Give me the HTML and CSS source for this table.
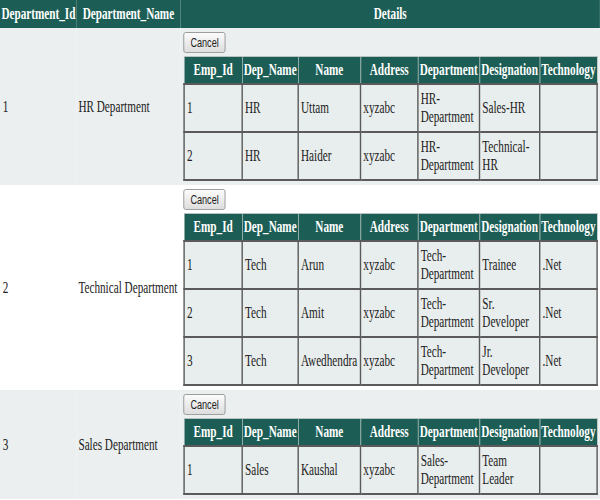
FILE: index.html
```html
<!DOCTYPE html>
<html>
<head>
<meta charset="utf-8">
<link rel="stylesheet" href="styles.css">
</head>
<body>
<div class="frame">
<div class="page">
<table class="grid">
  <colgroup><col class="c-id"><col class="c-name"><col></colgroup>
  <tr class="head">
    <th>Department_Id</th><th>Department_Name</th><th>Details</th>
  </tr>
  <tr class="row">
    <td>1</td><td>HR Department</td>
    <td class="details">
      <button class="btn">Cancel</button>
      <table class="sub">
        <colgroup><col class="s1"><col class="s2"><col class="s3"><col class="s4"><col class="s5"><col class="s6"><col></colgroup>
        <tr><th>Emp_Id</th><th>Dep_Name</th><th>Name</th><th>Address</th><th>Department</th><th>Designation</th><th>Technology</th></tr>
        <tr><td>1</td><td>HR</td><td>Uttam</td><td>xyzabc</td><td>HR-Department</td><td>Sales-HR</td><td></td></tr>
        <tr><td>2</td><td>HR</td><td>Haider</td><td>xyzabc</td><td>HR-Department</td><td>Technical-HR</td><td></td></tr>
      </table>
    </td>
  </tr>
  <tr class="row alt">
    <td>2</td><td>Technical Department</td>
    <td class="details">
      <button class="btn">Cancel</button>
      <table class="sub">
        <colgroup><col class="s1"><col class="s2"><col class="s3"><col class="s4"><col class="s5"><col class="s6"><col></colgroup>
        <tr><th>Emp_Id</th><th>Dep_Name</th><th>Name</th><th>Address</th><th>Department</th><th>Designation</th><th>Technology</th></tr>
        <tr><td>1</td><td>Tech</td><td>Arun</td><td>xyzabc</td><td>Tech-Department</td><td>Trainee</td><td>.Net</td></tr>
        <tr><td>2</td><td>Tech</td><td>Amit</td><td>xyzabc</td><td>Tech-Department</td><td>Sr. Developer</td><td>.Net</td></tr>
        <tr><td>3</td><td>Tech</td><td>Awedhendra</td><td>xyzabc</td><td>Tech-Department</td><td>Jr. Developer</td><td>.Net</td></tr>
      </table>
    </td>
  </tr>
  <tr class="row">
    <td>3</td><td>Sales Department</td>
    <td class="details">
      <button class="btn">Cancel</button>
      <table class="sub">
        <colgroup><col class="s1"><col class="s2"><col class="s3"><col class="s4"><col class="s5"><col class="s6"><col></colgroup>
        <tr><th>Emp_Id</th><th>Dep_Name</th><th>Name</th><th>Address</th><th>Department</th><th>Designation</th><th>Technology</th></tr>
        <tr><td>1</td><td>Sales</td><td>Kaushal</td><td>xyzabc</td><td>Sales-Department</td><td>Team Leader</td><td></td></tr>
      </table>
    </td>
  </tr>
</table>
</div>
</div>
</body>
</html>
```

FILE: styles.css
```css
html, body {
  margin: 0;
  padding: 0;
  overflow: hidden;
  background: #ffffff;
}

.frame {
  width: 600px;
  height: 500px;
  overflow: hidden;
}

.page {
  width: 857px;
  transform: scaleX(0.7);
  transform-origin: 0 0;
  font-family: "Liberation Serif", "Times New Roman", serif;
  font-size: 16px;
  color: #222222;
}

.grid {
  width: 857px;
  border-collapse: collapse;
  table-layout: fixed;
}

.c-id { width: 109px; }
.c-name { width: 149px; }

.head > th {
  background: #1c5e55;
  color: #ffffff;
  font-weight: bold;
  padding: 5px 2px;
  text-align: center;
  white-space: nowrap;
}

.row > td {
  padding: 4px;
  vertical-align: middle;
  white-space: nowrap;
  text-align: left;
}

.row > td:nth-child(2) {
  padding-left: 3px;
  padding-right: 1px;
}

.row { background: #ebefef; }
.row.alt { background: #ffffff; }

.row > td.details {
  white-space: normal;
  padding: 4px 3px 4px 4px;
}

.btn {
  display: block;
  height: 21px;
  margin: 0 0 3px 0;
  padding: 1px 9px;
  font-family: "Liberation Sans", Arial, sans-serif;
  font-size: 13px;
  color: #222222;
  background: linear-gradient(#fbfbfb, #dedede);
  border: 1px solid #8f8f8f;
  border-radius: 3px;
}

.sub {
  width: 100%;
  border-collapse: collapse;
  table-layout: fixed;
}

.s1 { width: 83px; }
.s2 { width: 80px; }
.s3 { width: 89px; }
.s4 { width: 82px; }
.s5 { width: 88px; }
.s6 { width: 86px; }

.sub th {
  background: #1c5e55;
  color: #ffffff;
  font-weight: bold;
  padding: 4px 1px;
  text-align: center;
  white-space: nowrap;
  border: 1px solid #b7c3c1;
}

.sub td {
  background: #e8eded;
  padding: 5px 3px;
  text-align: left;
  vertical-align: middle;
  border: 2px solid #5a5a5a;
}
```
